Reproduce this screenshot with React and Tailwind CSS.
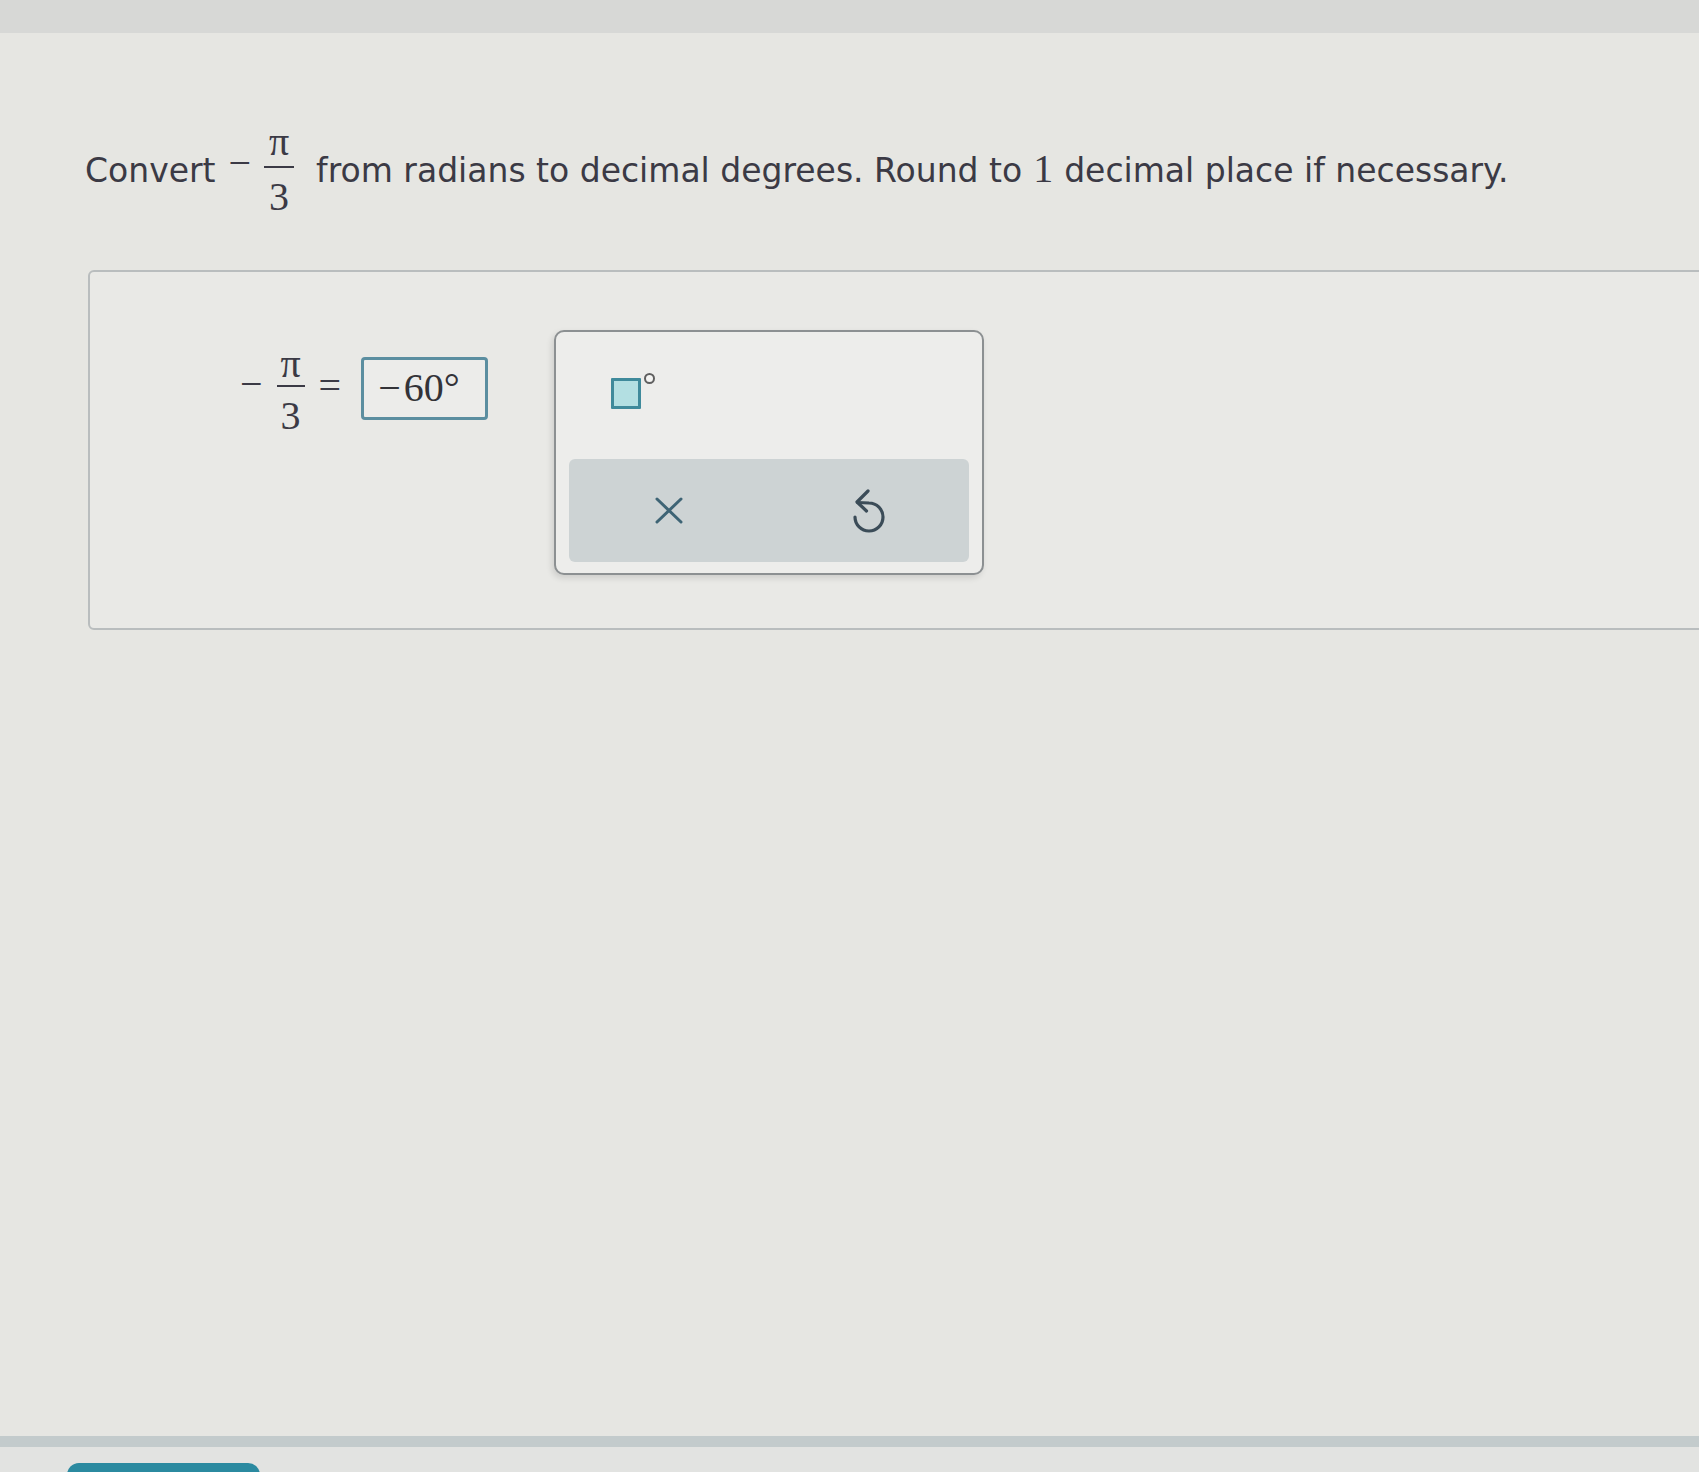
import React from "react";

const SANS = "font-['DejaVu_Sans',Verdana,sans-serif]";
const SERIF = "font-['Liberation_Serif','Times_New_Roman',serif]";

function Frac({ className = "", barW = "w-[30px]", barMt = "mt-[4px]", denMt = "mt-[9px]" }) {
  return (
    <div className={`flex flex-col items-center ${SERIF} ${className}`}>
      <span className="text-[40px] leading-none">π</span>
      <div className={`h-[2px] ${barW} ${barMt} bg-[#3b3a45]`} />
      <span className={`text-[40px] leading-none ${denMt}`}>3</span>
    </div>
  );
}

function XIcon() {
  return (
    <svg width="30" height="29" viewBox="0 0 30 29" fill="none">
      <path d="M3 3 L27 26 M27 3 L3 26" stroke="#3e6475" strokeWidth="3" strokeLinecap="round" />
    </svg>
  );
}

function UndoIcon() {
  return (
    <svg width="36" height="46" viewBox="0 0 36 46" fill="none">
      <path
        d="M17 3 L6 14 L15.5 23"
        stroke="#3b4c58"
        strokeWidth="3.2"
        strokeLinecap="round"
        strokeLinejoin="round"
      />
      <path
        d="M6.5 14.5 L18 15 A14 14 0 1 1 4 29"
        stroke="#3b4c58"
        strokeWidth="3.2"
        strokeLinecap="round"
        strokeLinejoin="round"
      />
    </svg>
  );
}

export default function App() {
  return (
    <div className="relative flex h-[1472px] w-full flex-col overflow-hidden bg-[#e6e6e2] text-[#3b3a45]">
      <div className="h-[33px] w-full shrink-0 bg-[#d7d8d6]" />

      {/* Question line */}
      <div className="mt-[89px] flex h-[95px] shrink-0 items-start whitespace-nowrap pl-[85px]">
        <span className={`${SANS} mt-[29px] text-[33px] leading-[40px]`}>Convert</span>
        <span className={`${SERIF} ml-[13px] mt-[21px] text-[40px] leading-none`}>−</span>
        <Frac className="ml-[13px]" barW="w-[30px]" barMt="mt-[4px]" denMt="mt-[9px]" />
        <span className={`${SANS} ml-[22px] mt-[29px] text-[33px] leading-[40px]`}>
          from radians to decimal degrees. Round to
        </span>
        <span className={`${SERIF} ml-[11px] mt-[27px] text-[40px] leading-none`}>1</span>
        <span className={`${SANS} ml-[11px] mt-[29px] text-[33px] leading-[40px]`}>
          decimal place if necessary.
        </span>
      </div>

      {/* Answer panel */}
      <div className="ml-[88px] mt-[53px] flex h-[360px] w-[1650px] shrink-0 items-start rounded-[6px] border-2 border-[#b9bdbe] bg-[#e9e9e6]">
        <div className="ml-[150px] mt-[72px] flex items-start whitespace-nowrap">
          <span className={`${SERIF} mt-[20px] text-[40px] leading-none`}>−</span>
          <Frac className="ml-[14px]" barW="w-[28px]" barMt="mt-[1px]" denMt="mt-[9px]" />
          <span className={`${SERIF} ml-[14px] mt-[22px] text-[40px] leading-none`}>=</span>
          <div className="ml-[20px] mt-[13px] flex h-[63px] w-[127px] items-start rounded-[4px] border-[3px] border-[#5b8ea0] bg-[#ececea] pl-[14px] pt-[8px]">
            <span className={`${SERIF} text-[40px] leading-none text-[#333338]`}>−</span>
            <span className={`${SERIF} ml-[3px] text-[40px] leading-none text-[#333338]`}>60°</span>
          </div>
        </div>

        {/* Keypad */}
        <div className="ml-[66px] mt-[58px] flex h-[245px] w-[430px] flex-col rounded-[10px] border-2 border-[#8c9092] bg-[#ededeb] shadow-[-2px_3px_6px_rgba(0,0,0,0.12)]">
          <div className="ml-[55px] mt-[41px] flex h-[36px] items-start">
            <div className="mt-[5px] h-[31px] w-[30px] rounded-[1px] border-[3px] border-[#3f8a9b] bg-[#b3dfe2]" />
            <div className="ml-[3px] h-[11px] w-[11px] rounded-full border-2 border-[#5f5f5f] bg-[#f4f4f2]" />
          </div>
          <div className="mx-[13px] mt-[50px] grid h-[103px] grid-cols-2 items-center rounded-[6px] bg-[#cdd3d4]">
            <div className="flex items-center justify-center">
              <XIcon />
            </div>
            <div className="flex items-center justify-center">
              <UndoIcon />
            </div>
          </div>
        </div>
      </div>

      {/* Bottom */}
      <div className="mt-auto shrink-0">
        <div className="h-[11px] w-full bg-[#c3cbcc]" />
        <div className="h-[25px] w-full bg-[#e2e3e1] pl-[67px] pt-[16px]">
          <div className="h-[12px] w-[193px] rounded-t-[12px] bg-[#2b8aa0]" />
        </div>
      </div>
    </div>
  );
}
